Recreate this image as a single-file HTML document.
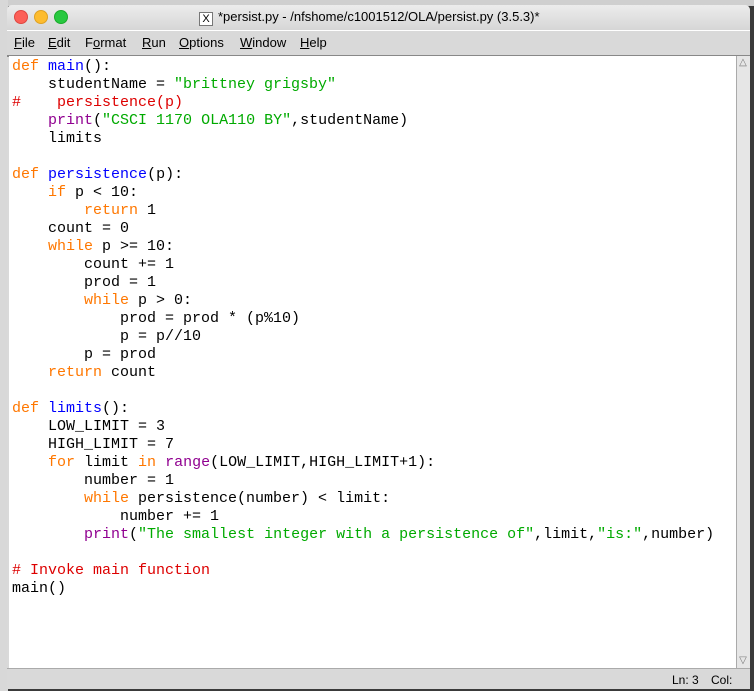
<!DOCTYPE html>
<html><head><style>
body{margin:0;width:754px;height:691px;background:#3a3a3a;position:relative;overflow:hidden;font-family:"Liberation Sans",sans-serif}
.bgl{position:absolute;left:0;top:0;width:8px;height:691px;background:#d8d8d8}
.bgt{position:absolute;left:0;top:0;width:754px;height:6px;background:#cfcfcf}
.win{position:absolute;left:7px;top:5px;width:743px;height:684px;background:#d9d9d9;border-radius:5px 5px 0 0;overflow:hidden}
.title{position:absolute;left:0;top:0;width:743px;height:25px;background:linear-gradient(#ececec,#d6d6d6);border-bottom:1px solid #fff}
.dot{position:absolute;top:5px;width:12px;height:12px;border-radius:50%}
.tt{position:absolute;left:192px;top:4px;font-size:13px;color:#000}
.xi{display:inline-block;width:12px;height:12px;border:1px solid #777;font-size:11px;line-height:12px;text-align:center;margin-right:5px;vertical-align:-1px;background:#fff}
.menu{position:absolute;left:0;top:26px;width:743px;height:24px;background:#d9d9d9;border-bottom:2px solid #888;font-size:13px}
.menu span{position:absolute;top:4px}
.text{position:absolute;left:2px;top:51px;width:727px;height:612px;background:#fff}
pre{margin:0;position:absolute;left:3px;top:2px;font-family:"Liberation Mono",monospace;font-size:15px;line-height:18px;color:#000}
.k{color:#ff7700}.f{color:#0000ff}.s{color:#00aa00}.c{color:#dd0000}.b{color:#900090}
.sb{position:absolute;left:729px;top:51px;width:13px;height:612px;background:#e6e6e6;border-left:1px solid #aaa}
.status{position:absolute;left:0;top:663px;width:743px;height:21px;background:#d9d9d9;border-top:1px solid #aaa;font-size:12px}
</style></head><body>
<div class="bgt"></div><div class="bgl"></div>
<div class="win">
<div class="title">
<div class="dot" style="left:7px;background:#fc5f57;border:1px solid #de4640"></div>
<div class="dot" style="left:27px;background:#fdbc2e;border:1px solid #dea123"></div>
<div class="dot" style="left:47px;background:#28c840;border:1px solid #1aab2a"></div>
<div class="tt"><span class="xi">X</span>*persist.py - /nfshome/c1001512/OLA/persist.py (3.5.3)*</div>
</div>
<div class="menu">
<span style="left:7px"><u>F</u>ile</span><span style="left:41px"><u>E</u>dit</span><span style="left:78px">F<u>o</u>rmat</span><span style="left:135px"><u>R</u>un</span><span style="left:172px"><u>O</u>ptions</span><span style="left:233px"><u>W</u>indow</span><span style="left:293px"><u>H</u>elp</span>
</div>
<div class="text"><pre><span class="k">def</span> <span class="f">main</span>():
    studentName = <span class="s">"brittney grigsby"</span>
<span class="c">#    persistence(p)</span>
    <span class="b">print</span>(<span class="s">"CSCI 1170 OLA110 BY"</span>,studentName)
    limits

<span class="k">def</span> <span class="f">persistence</span>(p):
    <span class="k">if</span> p &lt; 10:
        <span class="k">return</span> 1
    count = 0
    <span class="k">while</span> p &gt;= 10:
        count += 1
        prod = 1
        <span class="k">while</span> p &gt; 0:
            prod = prod * (p%10)
            p = p//10
        p = prod
    <span class="k">return</span> count

<span class="k">def</span> <span class="f">limits</span>():
    LOW_LIMIT = 3
    HIGH_LIMIT = 7
    <span class="k">for</span> limit <span class="k">in</span> <span class="b">range</span>(LOW_LIMIT,HIGH_LIMIT+1):
        number = 1
        <span class="k">while</span> persistence(number) &lt; limit:
            number += 1
        <span class="b">print</span>(<span class="s">"The smallest integer with a persistence of"</span>,limit,<span class="s">"is:"</span>,number)

<span class="c"># Invoke main function</span>
main()</pre></div>
<div class="sb"><div style="position:absolute;left:1px;top:1px;width:10px;height:12px;font-size:10px;text-align:center;color:#777">△</div><div style="position:absolute;left:1px;bottom:1px;width:10px;height:12px;font-size:10px;text-align:center;color:#777">▽</div></div>
<div class="status"><span style="position:absolute;left:665px;top:4px">Ln: 3</span><span style="position:absolute;left:704px;top:4px">Col:</span></div>
</div>
</body></html>
